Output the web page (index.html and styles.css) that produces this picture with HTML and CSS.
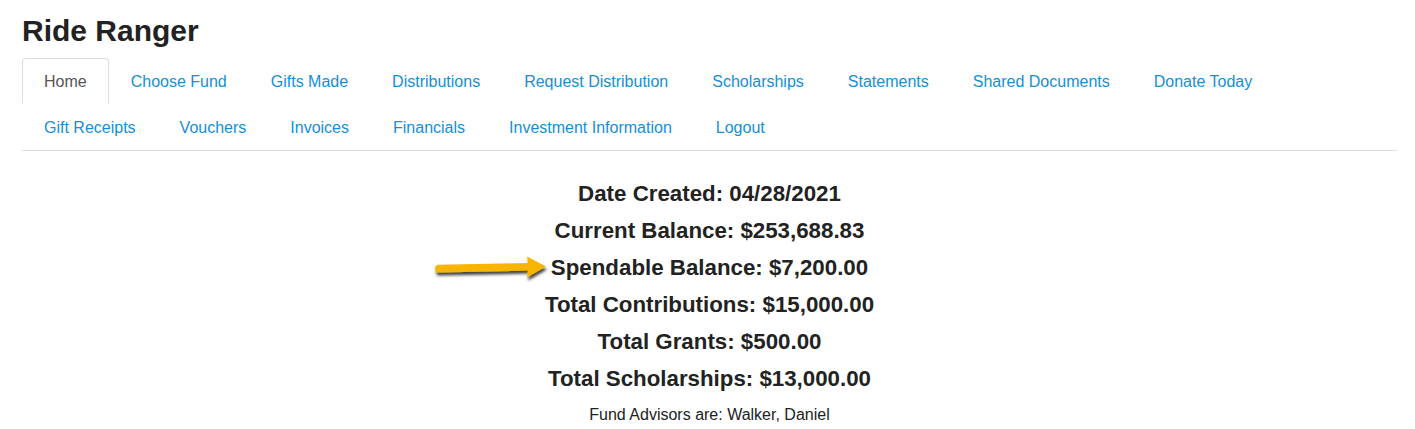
FILE: index.html
```html
<!DOCTYPE html>
<html lang="en">
<head>
<meta charset="utf-8">
<title>Ride Ranger</title>
<link rel="stylesheet" href="styles.css">
</head>
<body>
<div class="container">
  <h1 class="title">Ride Ranger</h1>
  <ul class="tabs">
    <li><a class="tab active" href="#">Home</a></li>
    <li><a class="tab" href="#">Choose Fund</a></li>
    <li><a class="tab" href="#">Gifts Made</a></li>
    <li><a class="tab" href="#">Distributions</a></li>
    <li><a class="tab" href="#">Request Distribution</a></li>
    <li><a class="tab" href="#">Scholarships</a></li>
    <li><a class="tab" href="#">Statements</a></li>
    <li><a class="tab" href="#">Shared Documents</a></li>
    <li><a class="tab" href="#">Donate Today</a></li>
    <li><a class="tab" href="#">Gift Receipts</a></li>
    <li><a class="tab" href="#">Vouchers</a></li>
    <li><a class="tab" href="#">Invoices</a></li>
    <li><a class="tab" href="#">Financials</a></li>
    <li><a class="tab" href="#">Investment Information</a></li>
    <li><a class="tab" href="#">Logout</a></li>
  </ul>
  <div class="summary">
    <div class="stat">Date Created: 04/28/2021</div>
    <div class="stat">Current Balance: $253,688.83</div>
    <div class="stat"><span class="marked"><svg class="arrow" width="116" height="30" viewBox="0 0 116 30" aria-hidden="true">
      <defs>
        <filter id="sh" x="-10%" y="-40%" width="130%" height="200%">
          <feGaussianBlur in="SourceAlpha" stdDeviation="1.6"/>
          <feOffset dx="1" dy="3" result="b"/>
          <feComponentTransfer><feFuncA type="linear" slope="0.75"/></feComponentTransfer>
          <feMerge><feMergeNode/><feMergeNode in="SourceGraphic"/></feMerge>
        </filter>
      </defs>
      <path filter="url(#sh)" fill="#f7b500" d="M6 12.8 L95 11 L94 4.5 L113 14.5 L94 25.5 L95 18.6 L6 20.6 A3.9 3.9 0 0 1 6 12.8 Z"/>
    </svg>Spendable Balance: $7,200.00</span></div>
    <div class="stat">Total Contributions: $15,000.00</div>
    <div class="stat">Total Grants: $500.00</div>
    <div class="stat">Total Scholarships: $13,000.00</div>
    <div class="advisors">Fund Advisors are: Walker, Daniel</div>
  </div>
</div>
</body>
</html>
```

FILE: styles.css
```css
html, body {
  margin: 0;
  padding: 0;
  background: #fff;
}
body {
  font-family: "Liberation Sans", Arial, sans-serif;
  color: #222;
}
.container {
  padding: 0 18px 0 22px;
}
.title {
  margin: 0;
  padding-top: 14px;
  font-size: 30px;
  line-height: 33px;
  font-weight: bold;
  color: #222;
}
.tabs {
  list-style: none;
  margin: 11px 0 0 0;
  padding: 0;
  display: flex;
  flex-wrap: wrap;
  border-bottom: 1px solid #ddd;
}
.tabs li {
  display: block;
}
.tab {
  display: block;
  padding: 12px 21px 10px;
  font-size: 16px;
  line-height: 22px;
  color: #148fd9;
  text-decoration: none;
  border: 1px solid transparent;
  border-radius: 4px 4px 0 0;
}
.tab.active {
  color: #555;
  border-color: #ddd;
  border-bottom-color: transparent;
  background: #fff;
}
.summary {
  margin-top: 24px;
  text-align: center;
}
.stat {
  font-size: 22.3px;
  line-height: 37px;
  font-weight: bold;
  color: #222;
}
.marked {
  position: relative;
}
.arrow {
  position: absolute;
  right: 100%;
  top: 50%;
  margin-top: -16px;
  margin-right: 2px;
}
.advisors {
  margin-top: 7px;
  font-size: 16px;
  line-height: 22px;
  color: #222;
}
```
